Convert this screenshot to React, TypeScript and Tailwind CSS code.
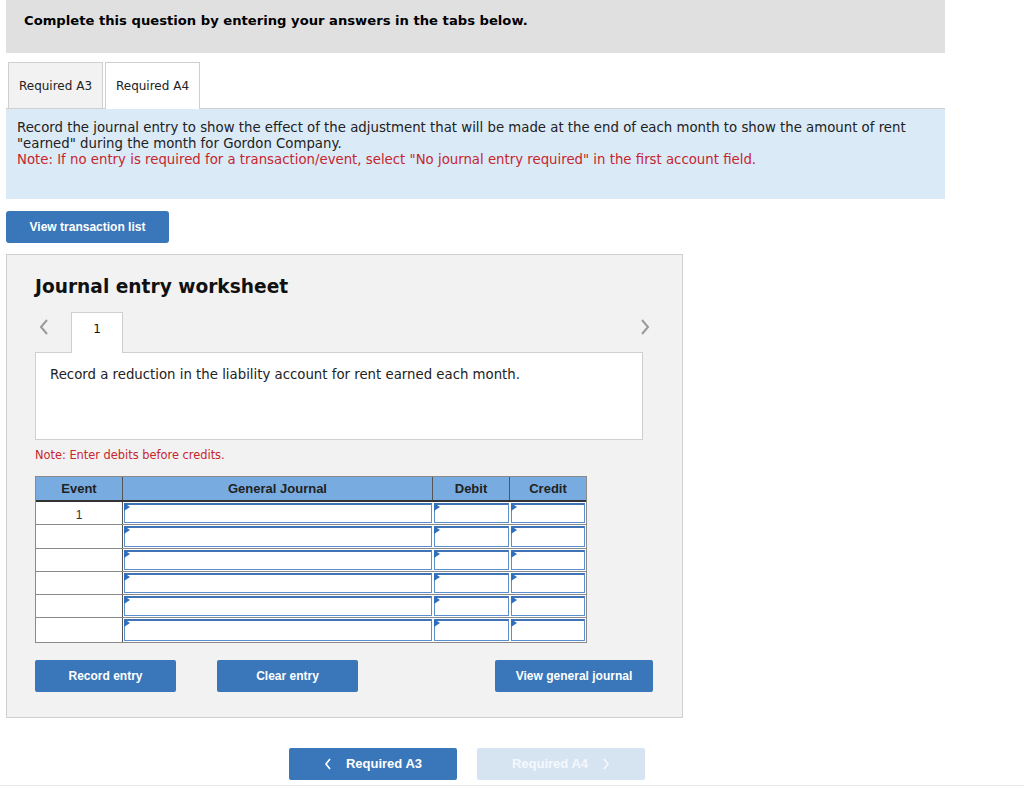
import React from "react";

const verdana = { fontFamily: '"DejaVu Sans", Verdana, sans-serif' };

function Cell({ w }: { w: string }) {
  return (
    <div className={`${w} h-full p-[1px] relative`}>
      <div className="h-full w-full bg-white border border-[#5b8fcf] border-t-2 border-t-[#3f73b6]" />
      <div className="absolute left-[1px] top-[1px] w-0 h-0 border-t-[4px] border-b-[4px] border-l-[6px] border-t-transparent border-b-transparent border-l-[#2f6fbf]" />
    </div>
  );
}

export default function App() {
  const rows = [0, 1, 2, 3, 4, 5];
  return (
    <div className="w-[1024px] h-[789px] bg-white relative overflow-hidden" style={verdana}>
      <div className="ml-[6px] w-[939px]">
        <div className="h-[53px] bg-[#e0e0e0] pl-[18px] pt-[12px] leading-[16px]">
          <span className="text-[13.15px] font-bold text-black leading-[16px]">Complete this question by entering your answers in the tabs below.</span>
        </div>
        <div className="mt-[9px] flex items-end h-[47px] border-b border-[#d0d0d0]">
          <div className="ml-[2px] w-[95px] h-[46px] bg-[#f2f2f2] border border-[#cfcfcf] border-b-0 flex items-center justify-center text-[12px] text-[#222]">Required A3</div>
          <div className="ml-[2px] w-[95px] h-[47px] bg-white border border-[#cfcfcf] border-b-0 flex items-center justify-center text-[12px] text-[#222] -mb-[1px]">Required A4</div>
        </div>
        <div className="h-[90px] bg-[#dbeaf7] pl-[11px] pt-[11px] text-[13.3px] leading-[16px]">
          <div className="text-[#222]">Record the journal entry to show the effect of the adjustment that will be made at the end of each month to show the amount of rent "earned" during the month for Gordon Company.</div>
          <div className="text-[#c6262e]">Note: If no entry is required for a transaction/event, select "No journal entry required" in the first account field.</div>
        </div>
        <button className="mt-[12px] w-[163px] h-[32px] rounded-[3px] bg-[#3a76ba] text-white text-[12px] font-bold" style={{ fontFamily: '"Liberation Sans", Arial, sans-serif' }}>View transaction list</button>
      </div>

      <div className="ml-[6px] mt-[11px] w-[677px] h-[464px] bg-[#f2f2f2] border border-[#cfcfcf] pl-[28px] pr-[39px]">
        <div className="mt-[20px] text-[18.6px] font-bold text-[#111] leading-[24px]">Journal entry worksheet</div>
        <div className="mt-[13px] h-[40px] flex items-start relative">
          <svg className="absolute left-[3px] top-[7px]" width="12" height="16" viewBox="0 0 12 16"><path d="M9 1 L3 8 L9 15" stroke="#9a9a9a" strokeWidth="2" fill="none" /></svg>
          <div className="ml-[36px] w-[52px] h-[41px] bg-white border border-[#cfcfcf] border-b-0 flex items-start justify-center pt-[7px] text-[12px] text-[#111] relative z-10">1</div>
          <svg className="absolute right-[-8px] top-[7px]" width="12" height="16" viewBox="0 0 12 16"><path d="M3 1 L9 8 L3 15" stroke="#9a9a9a" strokeWidth="2" fill="none" /></svg>
        </div>
        <div className="w-[608px] h-[88px] bg-white border border-[#cfcfcf] pl-[14px] pt-[14px] text-[13.3px] text-[#222] leading-[16px]">Record a reduction in the liability account for rent earned each month.</div>
        <div className="mt-[8px] text-[11.4px] text-[#c6262e] leading-[14px]">Note: Enter debits before credits.</div>
        <div className="mt-[14px] w-[552px] border border-[#8a8a8a] bg-white" style={{ fontFamily: '"Liberation Sans", Arial, sans-serif' }}>
          <div className="flex h-[25px] bg-[#78ace0] border-b-2 border-[#333] text-[13px] font-bold text-[#222]">
            <div className="w-[87px] flex items-center justify-center border-r border-[#555]">Event</div>
            <div className="w-[310px] flex items-center justify-center border-r border-[#555]">General Journal</div>
            <div className="w-[77px] flex items-center justify-center border-r border-[#555]">Debit</div>
            <div className="w-[76px] flex items-center justify-center">Credit</div>
          </div>
          {rows.map((r) => (
            <div key={r} className={`flex h-[23.3px] ${r < 5 ? "border-b border-[#8a8a8a]" : ""}`}>
              <div className="w-[87px] border-r border-[#555] flex items-start justify-center pt-[4px] text-[12px] text-[#333]">{r === 0 ? "1" : ""}</div>
              <Cell w="w-[310px]" />
              <Cell w="w-[77px]" />
              <Cell w="w-[76px]" />
            </div>
          ))}
        </div>
        <div className="mt-[17px] flex" style={{ fontFamily: '"Liberation Sans", Arial, sans-serif' }}>
          <button className="w-[141px] h-[32px] rounded-[2px] bg-[#3a76ba] text-white text-[12px] font-bold">Record entry</button>
          <button className="ml-[41px] w-[141px] h-[32px] rounded-[2px] bg-[#3a76ba] text-white text-[12px] font-bold">Clear entry</button>
          <button className="ml-auto mr-[-10px] w-[158px] h-[32px] rounded-[2px] bg-[#3a76ba] text-white text-[12px] font-bold">View general journal</button>
        </div>
      </div>

      <div className="mt-[30px] flex pl-[289px]" style={{ fontFamily: '"Liberation Sans", Arial, sans-serif' }}>
        <button className="w-[168px] h-[32px] rounded-[2px] bg-[#3a76ba] text-white text-[13px] font-bold flex items-center justify-center gap-[14px]">
          <svg width="8" height="12" viewBox="0 0 8 12"><path d="M6 1 L2 6 L6 11" stroke="white" strokeWidth="1.6" fill="none" /></svg>
          <span>Required A3</span>
        </button>
        <button className="ml-[20px] w-[168px] h-[32px] rounded-[2px] bg-[#d6e4f2] text-[#f4f8fc] text-[13px] font-bold flex items-center justify-center gap-[14px]">
          <span>Required A4</span>
          <svg width="8" height="12" viewBox="0 0 8 12"><path d="M2 1 L6 6 L2 11" stroke="#f4f8fc" strokeWidth="1.6" fill="none" /></svg>
        </button>
      </div>
      <div className="absolute left-0 right-0 top-[785px] h-[1px] bg-[#e6e6e6]" />
    </div>
  );
}
